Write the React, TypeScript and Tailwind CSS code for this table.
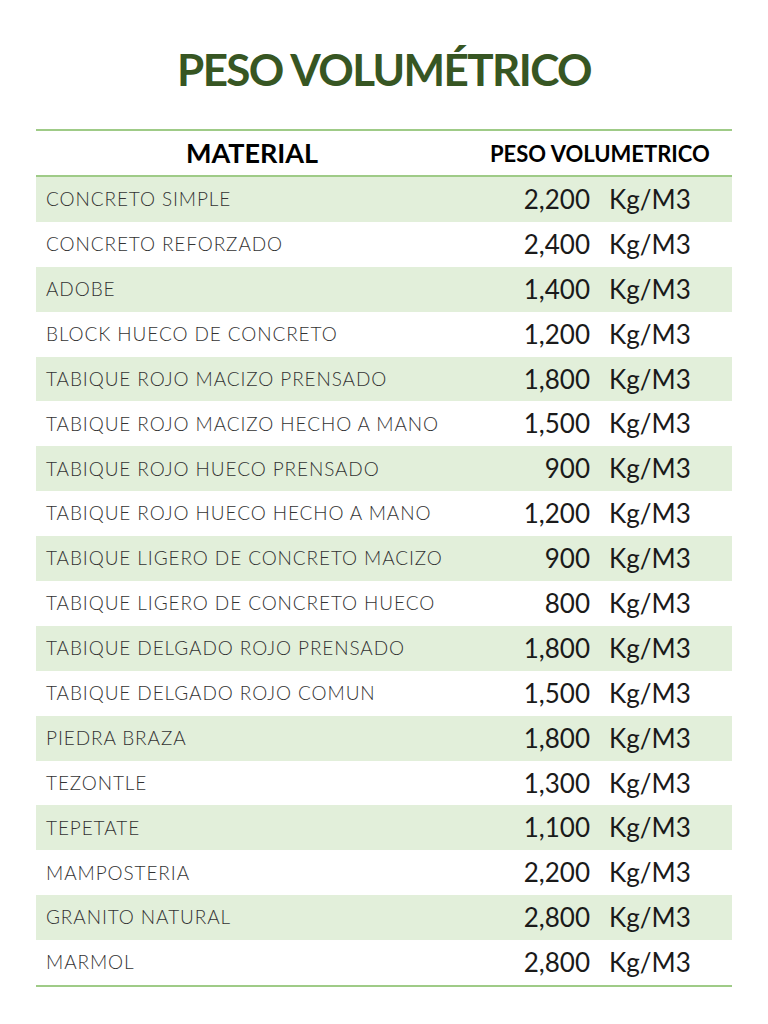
const rows: [string, string][] = [
  ["CONCRETO SIMPLE", "2,200"],
  ["CONCRETO REFORZADO", "2,400"],
  ["ADOBE", "1,400"],
  ["BLOCK HUECO DE CONCRETO", "1,200"],
  ["TABIQUE ROJO MACIZO PRENSADO", "1,800"],
  ["TABIQUE ROJO MACIZO HECHO A MANO", "1,500"],
  ["TABIQUE ROJO HUECO PRENSADO", "900"],
  ["TABIQUE ROJO HUECO HECHO A MANO", "1,200"],
  ["TABIQUE LIGERO DE CONCRETO MACIZO", "900"],
  ["TABIQUE LIGERO DE CONCRETO HUECO", "800"],
  ["TABIQUE DELGADO ROJO PRENSADO", "1,800"],
  ["TABIQUE DELGADO ROJO COMUN", "1,500"],
  ["PIEDRA BRAZA", "1,800"],
  ["TEZONTLE", "1,300"],
  ["TEPETATE", "1,100"],
  ["MAMPOSTERIA", "2,200"],
  ["GRANITO NATURAL", "2,800"],
  ["MARMOL", "2,800"],
];

export default function App() {
  return (
    <div className="w-[768px] h-[1024px] bg-white font-['Lato',sans-serif]">
      <h1 className="pt-[43px] h-[129px] text-center text-[44px] leading-[52px] font-bold tracking-[-1.6px] text-[#375623]">
        PESO VOLUMÉTRICO
      </h1>
      <div className="mx-[36px] border-y-2 border-[#9fcb87]">
        <div className="flex h-[46px] items-center border-b-2 border-[#9fcb87]">
          <div className="w-[432px] text-center text-[27px] font-bold text-black">MATERIAL</div>
          <div className="flex-1 pl-[22px] text-[22px] font-bold text-black">PESO VOLUMETRICO</div>
        </div>
        {rows.map(([name, value], i) => (
          <div
            key={name}
            className={`flex h-[44.9px] items-center ${i % 2 === 0 ? "bg-[#e2efda]" : "bg-white"}`}
          >
            <div className="flex-1 pl-[10px] text-[19px] font-light tracking-[0.9px] text-[#333333]">{name}</div>
            <div className="w-[90px] text-right text-[26px] text-[#1a1a1a]">{value}</div>
            <div className="w-[142px] pl-[19px] text-[26px] text-[#1a1a1a]">Kg/M3</div>
          </div>
        ))}
      </div>
    </div>
  );
}
